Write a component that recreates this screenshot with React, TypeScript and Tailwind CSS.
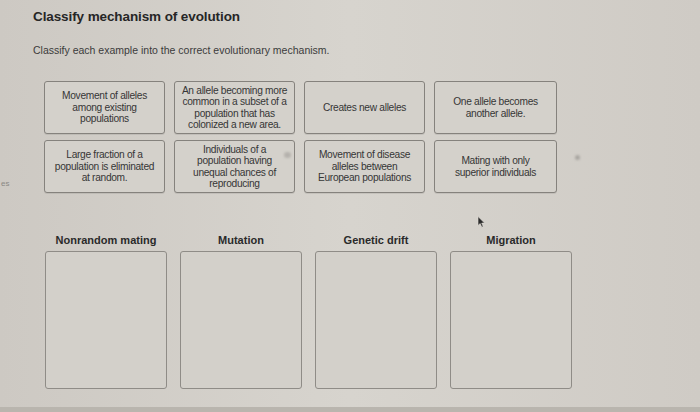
import React from "react";

const cards = [
  { text: "Movement of alleles among existing populations", pad: "px-[5px]" },
  { text: "An allele becoming more common in a subset of a population that has colonized a new area.", pad: "px-[5px]" },
  { text: "Creates new alleles", pad: "px-[5px]" },
  { text: "One allele becomes another allele.", pad: "px-[5px]" },
  { text: "Large fraction of a population is eliminated at random.", pad: "px-[5px]" },
  { text: "Individuals of a population having unequal chances of reproducing", pad: "px-[5px]" },
  { text: "Movement of disease alleles between European populations", pad: "px-[5px]" },
  { text: "Mating with only superior individuals", pad: "px-[16px]" },
];

const bins = ["Nonrandom mating", "Mutation", "Genetic drift", "Migration"];

function Cursor() {
  return (
    <svg width="9" height="12" viewBox="0 0 9 12" className="absolute left-[477px] top-[216px]">
      <path d="M1 0.5 L1 9.5 L3.2 7.6 L4.8 11.2 L6.2 10.6 L4.7 7.1 L7.6 7.1 Z" fill="#2b2b2b" stroke="#e5e2dc" strokeWidth="0.6" />
    </svg>
  );
}

export default function App() {
  return (
    <div
      className="relative w-[700px] h-[412px] overflow-hidden bg-gradient-to-r from-[#cdc9c3] via-[#d7d4ce] to-[#cfcbc5] text-[#2f2f2f]"
      style={{ fontFamily: '"Liberation Sans", Arial, sans-serif' }}
    >
      {/* label of a neighbouring panel peeking in at the left edge */}
      <span className="absolute left-[1px] top-[178px] text-[8px] text-[#8a8884]">es</span>

      <div className="pl-[33px] pt-[7px]">
        <h1 className="text-[13.5px] font-bold text-[#262626] tracking-[-0.1px]">Classify mechanism of evolution</h1>
        <p className="mt-[16px] text-[10.5px] text-[#3b3b3b]">Classify each example into the correct evolutionary mechanism.</p>
      </div>

      {/* draggable answer cards */}
      <div className="ml-[44px] mt-[22px] grid grid-cols-[121px_121px_121px_123px] gap-x-[9px] gap-y-[6px]">
        {cards.map((c) => (
          <div
            key={c.text}
            className={`h-[53px] rounded-[3px] border border-[#85827d] bg-[#d4d1cb] flex items-center justify-center ${c.pad} text-center text-[10.2px] leading-[11.5px] tracking-[-0.3px] text-[#363636] shadow-[0_1px_0_rgba(0,0,0,0.08)]`}
          >
            {c.text}
          </div>
        ))}
      </div>

      {/* target bins */}
      <div className="ml-[45px] mt-[40px] flex gap-[13px]">
        {bins.map((b) => (
          <div key={b} className="w-[122px] flex flex-col items-center">
            <span className="text-[11px] font-bold text-[#2a2a2a] leading-[14px]">{b}</span>
            <div className="mt-[4px] w-full h-[138px] rounded-[3px] border border-[#8f8c87] bg-[#d3d0ca]" />
          </div>
        ))}
      </div>

      {/* bottom bezel strip */}
      <div className="absolute left-0 bottom-0 w-full h-[5px] bg-[#b9b5ae]" />

      <div className="absolute left-[284px] top-[152px] w-[7px] h-[6px] rounded-full bg-[#b5b2ad] blur-[1px]" />
      <div className="absolute left-[575px] top-[155px] w-[5px] h-[5px] rounded-full bg-[#a9a6a1] blur-[1px]" />
      <Cursor />
    </div>
  );
}
